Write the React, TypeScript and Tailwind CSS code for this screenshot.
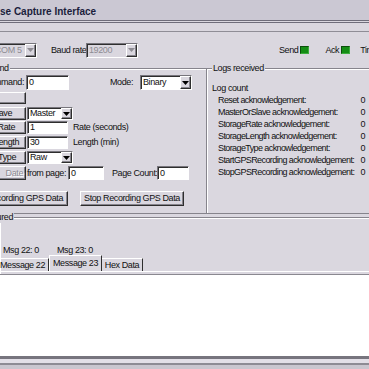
import React from "react";

const sunken =
  "border border-t-[#77757c] border-l-[#77757c] border-b-white border-r-white shadow-[inset_1px_1px_0_#2e2e2e]";
const raised =
  "border border-t-white border-l-white border-b-[#2e2e2e] border-r-[#2e2e2e] shadow-[inset_-1px_-1px_0_#86848c]";
const groupBorder = "border-[#86848c] shadow-[inset_1px_1px_0_#fff]";

function Arrow({ disabled }: { disabled?: boolean }) {
  return (
    <svg width="7" height="4" viewBox="0 0 7 4">
      <path d="M0 0h7L3.5 4z" fill={disabled ? "#8e8c93" : "#000"} />
    </svg>
  );
}

function Combo({
  value,
  className,
  disabled,
}: {
  value: string;
  className: string;
  disabled?: boolean;
}) {
  return (
    <div
      className={`shrink-0 flex items-stretch ${sunken} ${
        disabled ? "bg-[#dad7df] text-[#8e8c93]" : "bg-white"
      } ${className}`}
    >
      <span className="flex-1 pl-[2px] flex items-center whitespace-nowrap overflow-hidden">
        {value}
      </span>
      <span
        className={`shrink-0 w-[11px] flex items-center justify-center bg-[#dad7df] ${raised}`}
      >
        <Arrow disabled={disabled} />
      </span>
    </div>
  );
}

function Field({ value, className }: { value: string; className: string }) {
  return (
    <div
      className={`shrink-0 flex items-center pl-[2px] bg-white ${sunken} ${className}`}
    >
      {value}
    </div>
  );
}

function SideBtn({
  label,
  pr,
  disabled,
}: {
  label: string;
  pr: string;
  disabled?: boolean;
}) {
  return (
    <div
      className={`shrink-0 ml-[-20px] w-[46px] h-full flex items-center justify-end overflow-hidden whitespace-nowrap ${raised} ${pr} ${
        disabled ? "text-[#8e8c93] [text-shadow:1px_1px_0_#fff]" : ""
      }`}
    >
      {label}
    </div>
  );
}

function LogRow({ label }: { label: string }) {
  return (
    <div className="h-[12px] ml-[11px] w-[147px] flex items-center justify-between whitespace-nowrap tracking-[-0.6px]">
      <span>{label}</span>
      <span>0</span>
    </div>
  );
}

function Led() {
  return (
    <span className="shrink-0 ml-[2px] w-[9px] h-[8px] bg-[#168e16] border border-[#0c4f0c] border-b-[#3fae3f] border-r-[#3fae3f]" />
  );
}

export default function App() {
  return (
    <div className="w-[369px] h-[369px] overflow-hidden bg-[#dad7df] text-[#111] text-[9px] leading-none tracking-[-0.4px] font-['Liberation_Sans',Arial,sans-serif] flex flex-col">
      {/* title bar */}
      <div className="h-[20px] shrink-0 bg-[#cbc8d3] flex items-end pb-[3px] text-[10px] font-bold tracking-normal text-[#1b1d3c] whitespace-nowrap">
        se Capture Interface
      </div>
      <div className="h-[3px] shrink-0 border-y border-[#6f6d7a]" />
      <div className="h-[9px] shrink-0 border-b border-[#8f8d96]" />

      {/* connection row */}
      <div className="h-[36px] shrink-0 flex items-center whitespace-nowrap">
        <Combo value="COM 5" disabled className="ml-[-8px] w-[45px] h-[15px]" />
        <span className="shrink-0 ml-[14px] w-[35px]">Baud rate</span>
        <Combo value="19200" disabled className="w-[52px] h-[15px]" />
        <span className="shrink-0 ml-[141px]">Send</span>
        <Led />
        <span className="shrink-0 ml-[16px]">Ack</span>
        <Led />
        <span className="shrink-0 ml-[10px]">Timeout</span>
      </div>

      {/* groups */}
      <div className="h-[146px] shrink-0 flex">
        {/* Command group */}
        <div
          className={`ml-[-40px] w-[247px] shrink-0 border ${groupBorder} pl-[39px] flex flex-col`}
        >
          <span className="-mt-[6px] ml-[-30px] pr-[1px] self-start bg-[#dad7df] leading-[11px] whitespace-nowrap">
            Command
          </span>
          <div className="mt-[1px] h-[15px] flex items-center whitespace-nowrap">
            <span className="shrink-0 w-[24px] flex justify-end">Command:</span>
            <Field value="0" className="ml-[2px] w-[43px] h-full" />
            <span className="shrink-0 ml-[41px] w-[30px]">Mode:</span>
            <Combo value="Binary" className="w-[52px] h-full" />
          </div>
          <div className="mt-[2px] h-[12px] flex">
            <SideBtn label="" pr="pr-[2px]" />
          </div>
          <div className="mt-[3px] h-[13px] flex items-stretch">
            <SideBtn label="Slave" pr="pr-[13px]" />
            <Combo value="Master" className="ml-[1px] w-[46px]" />
          </div>
          <div className="mt-[1px] h-[13px] flex items-stretch whitespace-nowrap">
            <SideBtn label="Rate" pr="pr-[10px]" />
            <Field value="1" className="ml-[1px] w-[41px]" />
            <span className="shrink-0 ml-[5px] flex items-center">Rate (seconds)</span>
          </div>
          <div className="mt-[2px] h-[13px] flex items-stretch whitespace-nowrap">
            <SideBtn label="Length" pr="pr-[6px]" />
            <Field value="30" className="ml-[1px] w-[41px]" />
            <span className="shrink-0 ml-[5px] flex items-center">Length (min)</span>
          </div>
          <div className="mt-[2px] h-[13px] flex items-stretch">
            <SideBtn label="Type" pr="pr-[9px]" />
            <Combo value="Raw" className="ml-[1px] w-[46px]" />
          </div>
          <div className="mt-[2px] h-[14px] flex items-stretch whitespace-nowrap">
            <SideBtn label="Date" pr="pr-[2px]" disabled />
            <span className="shrink-0 ml-[1px] w-[41px] flex items-center">from page:</span>
            <Field value="0" className="w-[36px]" />
            <span className="shrink-0 ml-[8px] w-[45px] flex items-center">Page Count:</span>
            <Field value="0" className="w-[32px]" />
          </div>
          <div className="mt-[11px] h-[15px] flex items-stretch whitespace-nowrap">
            <div
              className={`shrink-0 ml-[-40px] w-[108px] flex items-center justify-end pr-[4px] overflow-hidden ${raised}`}
            >
              Start Recording GPS Data
            </div>
            <div
              className={`shrink-0 ml-[12px] w-[104px] flex items-center justify-center ${raised}`}
            >
              Stop Recording GPS Data
            </div>
          </div>
        </div>

        {/* Logs group */}
        <div className={`w-[180px] shrink-0 border border-l-0 ${groupBorder} flex flex-col`}>
          <span className="-mt-[6px] ml-[5px] px-[1px] self-start bg-[#dad7df] leading-[11px] whitespace-nowrap">
            Logs received
          </span>
          <div className="mt-[8px] h-[12px] ml-[5px] flex items-center">Log count</div>
          <LogRow label="Reset acknowledgement:" />
          <LogRow label="MasterOrSlave acknowledgement:" />
          <LogRow label="StorageRate acknowledgement:" />
          <LogRow label="StorageLength acknowledgement:" />
          <LogRow label="StorageType acknowledgement:" />
          <LogRow label="StartGPSRecording acknowledgement:" />
          <LogRow label="StopGPSRecording acknowledgement:" />
        </div>
      </div>

      {/* Data captured group */}
      <div className={`mt-[3px] flex-1 flex flex-col border-t ${groupBorder}`}>
        <span className="-mt-[6px] w-[14px] pr-[1px] flex justify-end bg-[#dad7df] leading-[11px] whitespace-nowrap">
          Data Captured
        </span>
        <div className="mt-[21px] h-[12px] pl-[3px] flex items-center whitespace-nowrap">
          <span className="w-[54px]">Msg 22: 0</span>
          <span>Msg 23: 0</span>
        </div>
        <div className="-mt-[1px] h-[16px] flex items-end whitespace-nowrap">
          <div className="shrink-0 ml-[-4px] w-[53px] h-[13px] flex items-center justify-center border-t border-l border-r border-t-white border-l-white border-r-[#2e2e2e]">
            Message 22
          </div>
          <div className="shrink-0 w-[53px] h-[16px] flex items-center justify-center border-t border-l border-r border-t-white border-l-white border-r-[#2e2e2e]">
            Message 23
          </div>
          <div className="shrink-0 w-[41px] h-[13px] flex items-center justify-center border-t border-r border-t-white border-r-[#2e2e2e]">
            Hex Data
          </div>
        </div>
        <div className="h-[1px] bg-white" />
        <div className="h-[2px]" />
        <div className="flex-1 bg-white border-t border-[#8a8890]" />
      </div>

      {/* window bottom frame */}
      <div className="h-[13px] shrink-0 flex flex-col">
        <div className="h-[3px] bg-[#77757e]" />
        <div className="h-[4px] bg-[#e2dfe7]" />
        <div className="h-[2px] bg-[#8d8b94]" />
        <div className="flex-1 bg-[#c9c6cf]" />
      </div>
    </div>
  );
}
